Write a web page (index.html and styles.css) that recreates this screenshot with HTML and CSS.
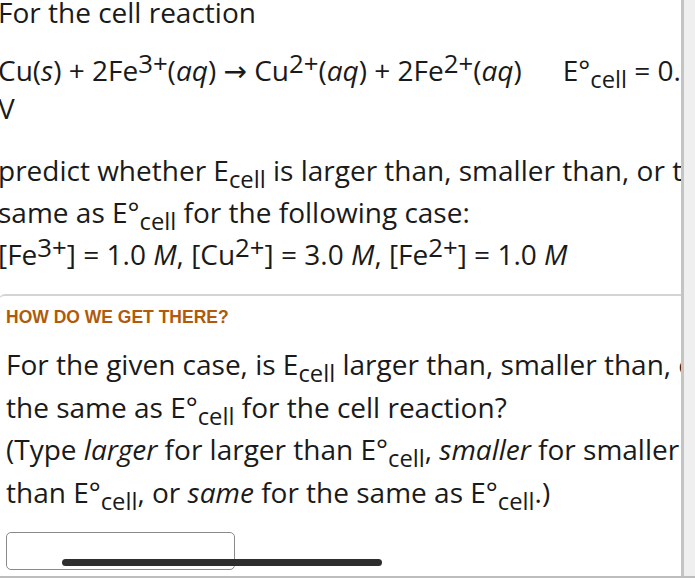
FILE: index.html
```html
<!DOCTYPE html>
<html>
<head>
<meta charset="utf-8">
<link rel="stylesheet" href="styles.css">
</head>
<body>
<div class="screen">
  <div class="viewport">
    <div class="content">
      <p class="intro">For the cell reaction</p>
      <p class="equation">Cu(<i>s</i>) + 2Fe<sup>3+</sup>(<i>aq</i>) → Cu<sup>2+</sup>(<i>aq</i>) + 2Fe<sup>2+</sup>(<i>aq</i>)<span class="gap"></span>E°<sub>cell</sub> = 0.43 V</p>
      <p class="question">predict whether E<sub>cell</sub> is larger than, smaller than, or the same as E°<sub>cell</sub> for the following case:<br>[Fe<sup>3+</sup>] = 1.0 <i>M</i>, [Cu<sup>2+</sup>] = 3.0 <i>M</i>, [Fe<sup>2+</sup>] = 1.0 <i>M</i></p>
      <div class="hint">
        <div class="hint-title">HOW DO WE GET THERE?</div>
        <p class="hint-text">For the given case, is E<sub>cell</sub> larger than, smaller than, or the same as E°<sub>cell</sub> for the cell reaction?<br>(Type <i>larger</i> for larger than E°<sub>cell</sub>, <i>smaller</i> for smaller than E°<sub>cell</sub>, or <i>same</i> for the same as E°<sub>cell</sub>.)</p>
        <div class="answer"></div>
      </div>
    </div>
  </div>
  <div class="scrollbar"></div>
  <div class="home-indicator"></div>
</div>
</body>
</html>
```
FILE: styles.css
```css
html, body {
  margin: 0;
  padding: 0;
  background: #fff;
}
body {
  width: 695px;
  height: 578px;
  overflow: hidden;
  font-family: "Open Sans", "DejaVu Sans", sans-serif;
  color: #1a1a1a;
}
.screen {
  position: relative;
  display: flex;
  width: 695px;
  height: 578px;
  border-bottom: 2px solid #bdbdbd;
  box-sizing: border-box;
}
.viewport {
  width: 681px;
  height: 100%;
  overflow: hidden;
  flex: none;
}
.content {
  width: 728px;
  margin-left: -2px;
  margin-top: -9px;
  font-size: 28px;
  line-height: 42px;
}
p {
  margin: 0;
}
sup, sub {
  line-height: 0;
  position: relative;
  vertical-align: baseline;
}
sup {
  font-size: 0.92em;
  top: -0.3em;
}
sub {
  font-size: 0.85em;
  top: 0.3em;
}
.intro {
  margin-bottom: 18px;
}
.equation {
  line-height: 38px;
  margin-bottom: 22px;
}
.gap {
  display: inline-block;
  width: 41px;
}
.question {
  margin-bottom: 19px;
}
.hint {
  margin-left: 1px;
  border-top: 2px solid #d4d4d4;
  border-top-left-radius: 6px;
  padding: 8px 7px 0;
}
.hint-title {
  font-family: "Liberation Sans", Arial, sans-serif;
  font-weight: bold;
  font-size: 17.5px;
  line-height: 26px;
  color: #b05a0a;
  margin-bottom: 13px;
}
.hint-text {
  line-height: 42.67px;
  margin-bottom: 18px;
}
.answer {
  width: 227px;
  height: 36px;
  border: 1px solid #8a8a8a;
  border-radius: 5px;
}
.scrollbar {
  flex: 1;
  height: 100%;
  border-left: 3px solid #c4c4c4;
  background: #efefef;
}
.home-indicator {
  position: absolute;
  left: 62px;
  top: 559px;
  width: 320px;
  height: 7px;
  border-radius: 4px;
  background: #2e2e2e;
}
```
